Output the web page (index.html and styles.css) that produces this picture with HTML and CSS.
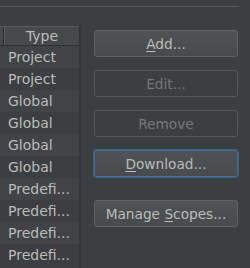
FILE: index.html
```html
<!DOCTYPE html>
<html>
<head>
<meta charset="utf-8">
<link rel="stylesheet" href="styles.css">
</head>
<body>
<div class="topline"></div>
<div class="main">
  <div class="table">
    <div class="header">
      <div class="hcell-prev"></div>
      <div class="hcell">Type</div>
    </div>
    <div class="rows">
      <div class="row odd">Project</div>
      <div class="row">Project</div>
      <div class="row odd">Global</div>
      <div class="row">Global</div>
      <div class="row odd">Global</div>
      <div class="row">Global</div>
      <div class="row odd">Predefi...</div>
      <div class="row">Predefi...</div>
      <div class="row odd">Predefi...</div>
      <div class="row">Predefi...</div>
    </div>
  </div>
  <div class="buttons">
    <button class="btn"><u>A</u>dd...</button>
    <button class="btn disabled">Edit...</button>
    <button class="btn disabled">Remove</button>
    <button class="btn focused"><u>D</u>ownload...</button>
    <button class="btn gap">Manage <u>S</u>copes...</button>
  </div>
</div>
</body>
</html>
```
FILE: styles.css
```css
html, body {
  margin: 0;
  padding: 0;
  background: #3c3f41;
  width: 250px;
  height: 268px;
  overflow: hidden;
  font-family: "DejaVu Sans", sans-serif;
  font-size: 14px;
  color: #bbbbbb;
}
.topline {
  margin-top: 6px;
  width: 239px;
  height: 1px;
  background: #515658;
}
.main {
  display: flex;
  margin-top: 19px;
  height: 243px;
  overflow: hidden;
}
.table {
  width: 79px;
  border-right: 2px solid #333638;
}
.header {
  display: flex;
  height: 18px;
  background: #45494a;
  border-top: 1px solid #555a5c;
  border-bottom: 1px solid #2f3233;
}
.hcell-prev {
  width: 3px;
  border-right: 1px solid #2b2d2e;
}
.hcell {
  flex: 1;
  text-align: center;
  line-height: 18px;
  border-left: 1px solid #555a5c;
}
.row {
  height: 22px;
  line-height: 22px;
  padding-left: 8px;
  white-space: nowrap;
}
.row.odd {
  background: #414446;
}
.buttons {
  display: flex;
  flex-direction: column;
  gap: 13px;
  margin-left: 13px;
  margin-top: 4px;
}
.btn {
  width: 144px;
  height: 27px;
  border: 1px solid #5e6264;
  border-radius: 3px;
  background: linear-gradient(#4f5355, #474b4d);
  color: #bbbbbb;
  font-family: "DejaVu Sans", sans-serif;
  font-size: 13.7px;
  padding: 0;
}
.btn u {
  text-decoration-thickness: 1px;
  text-underline-offset: 2px;
}
.btn.disabled {
  background: transparent;
  color: #777777;
  border-color: #55595b;
}
.btn.focused {
  border-color: #466d94;
  box-shadow: 0 0 0 1px #3d6185;
}
.btn.gap {
  margin-top: 10px;
}
```
